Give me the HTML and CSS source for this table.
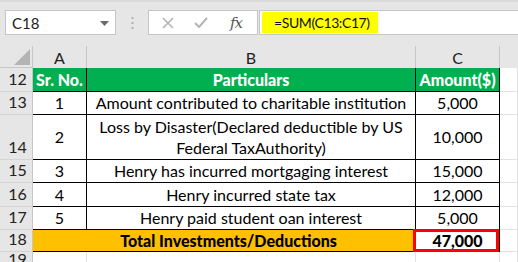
FILE: index.html
```html
<!DOCTYPE html>
<html>
<head>
<meta charset="utf-8">
<link rel="stylesheet" href="styles.css">
</head>
<body>
<div class="app">
  <div class="toolbar">
    <div class="namebox">
      <span class="nb-text">C18</span>
      <svg class="caret" width="9" height="5" viewBox="0 0 9 5"><path d="M0 0 H9 L4.5 5 Z" fill="#6a6a6a"/></svg>
    </div>
    <div class="grip">
      <svg width="3" height="12" viewBox="0 0 3 12"><rect x="0.5" y="0" width="2" height="2" fill="#b0b0b0"/><rect x="0.5" y="5" width="2" height="2" fill="#b0b0b0"/><rect x="0.5" y="10" width="2" height="2" fill="#b0b0b0"/></svg>
    </div>
    <div class="fbtns">
      <svg class="ico-x" width="12" height="12" viewBox="0 0 12 12"><path d="M1 1 L11 11 M11 1 L1 11" stroke="#b4b4b4" stroke-width="1.6" fill="none"/></svg>
      <svg class="ico-ok" width="14" height="11" viewBox="0 0 14 11"><path d="M1 6 L5 10 L13 1" stroke="#b4b4b4" stroke-width="2" fill="none"/></svg>
      <span class="fx">fx</span>
    </div>
    <div class="finput"><span class="hl">=SUM(C13:C17)</span></div>
  </div>
  <div class="sheet">
    <div class="corner"><svg width="16" height="16" viewBox="0 0 16 16"><path d="M16 0 V16 H0 Z" fill="#b4b4b4"/></svg></div>
    <div class="ch">A</div>
    <div class="ch">B</div>
    <div class="ch">C</div>
    <div class="ch ch-end"></div>

    <div class="rh">12</div>
    <div class="c hd">Sr. No.</div>
    <div class="c hd">Particulars</div>
    <div class="c hd">Amount($)</div>
    <div class="e"></div>

    <div class="rh">13</div>
    <div class="c">1</div>
    <div class="c">Amount contributed to charitable institution</div>
    <div class="c">5,000</div>
    <div class="e"></div>

    <div class="rh">14</div>
    <div class="c">2</div>
    <div class="c wrap">Loss by Disaster(Declared deductible by US Federal TaxAuthority)</div>
    <div class="c">10,000</div>
    <div class="e"></div>

    <div class="rh">15</div>
    <div class="c">3</div>
    <div class="c">Henry has incurred mortgaging interest</div>
    <div class="c">15,000</div>
    <div class="e"></div>

    <div class="rh">16</div>
    <div class="c">4</div>
    <div class="c">Henry incurred state tax</div>
    <div class="c">12,000</div>
    <div class="e"></div>

    <div class="rh">17</div>
    <div class="c">5</div>
    <div class="c">Henry paid student oan interest</div>
    <div class="c">5,000</div>
    <div class="e"></div>

    <div class="rh">18</div>
    <div class="c total">Total Investments/Deductions</div>
    <div class="c sum">47,000</div>
    <div class="e"></div>

    <div class="rh">19</div>
    <div class="e"></div>
    <div class="e"></div>
    <div class="e"></div>
    <div class="e"></div>
  </div>
</div>
</body>
</html>
```

FILE: styles.css
```css
* { box-sizing: border-box; }
html, body { margin: 0; padding: 0; }
body {
  width: 518px;
  height: 262px;
  overflow: hidden;
  background: #ffffff;
  font-family: "Lato", "Liberation Sans", sans-serif;
  color: #000;
}
.app { width: 518px; height: 262px; overflow: hidden; }

.toolbar {
  height: 46px;
  background: #e6e6e6;
  border-top: 2px solid #dadada;
  padding-top: 8px;
  display: flex;
  align-items: flex-start;
}
.namebox {
  margin-left: 5px;
  width: 111px;
  height: 25px;
  background: #fff;
  border: 1px solid #c6c6c6;
  display: flex;
  align-items: center;
  justify-content: space-between;
  padding: 0 6px 0 6px;
  font-size: 15px;
  color: #222;
}
.caret { margin-top: 1px; }
.grip {
  width: 32px;
  height: 25px;
  display: flex;
  align-items: center;
  justify-content: center;
}
.fbtns {
  width: 110px;
  height: 25px;
  background: #fff;
  border: 1px solid #c6c6c6;
  display: flex;
  align-items: center;
  padding-left: 13px;
}
.ico-x { margin-right: 20px; }
.ico-ok { margin-right: 22px; }
.fx {
  font-family: "DejaVu Serif", "Liberation Serif", serif;
  font-style: italic;
  font-size: 15px;
  color: #555;
  letter-spacing: -1px;
}
.finput {
  margin-left: 1px;
  flex: 1;
  height: 25px;
  background: #fff;
  border: 1px solid #c6c6c6;
  border-right: none;
  padding: 1px 0 1px 2px;
  display: flex;
}
.hl {
  background: #ffff00;
  width: 116px;
  height: 100%;
  display: flex;
  align-items: center;
  padding-left: 12px;
  font-size: 14px;
  letter-spacing: -0.4px;
  color: #111;
}

.sheet {
  display: grid;
  grid-template-columns: 33px 54px 329px 84px 18px;
  grid-template-rows: 22px 24px 23px 45px 23px 24px 23px 22px 20px;
  font-size: 16px;
}
.corner {
  background: #e6e6e6;
  border-right: 1px solid #c6c6c6;
  border-bottom: 1px solid #c6c6c6;
  display: flex;
  align-items: flex-end;
  justify-content: flex-end;
  padding: 0 2px 2px 0;
}
.ch {
  background: #e6e6e6;
  border-right: 1px solid #c6c6c6;
  display: flex;
  align-items: center;
  justify-content: center;
  font-size: 16px;
  color: #222;
  padding-top: 1px;
}
.ch-end { border-right: none; }
.rh {
  background: #e6e6e6;
  border-right: 1px solid #c6c6c6;
  border-bottom: 1px solid #d4d4d4;
  display: flex;
  align-items: flex-end;
  justify-content: center;
  padding: 0 0 2px 3px;
  font-size: 16px;
  color: #222;
  line-height: 20px;
}
.c {
  border-right: 1px solid #000;
  border-bottom: 1px solid #000;
  display: flex;
  align-items: center;
  justify-content: center;
  text-align: center;
  white-space: nowrap;
  line-height: 20px;
}
.wrap { white-space: normal; line-height: 21px; padding: 0 8px; }
.hd {
  background: #00b050;
  color: #fff;
  font-weight: 900;
}
.total {
  grid-column: span 2;
  background: #ffc000;
  font-weight: 900;
  border-right: none;
  padding-left: 8px;
}
.sum {
  font-weight: 900;
  position: relative;
}
.sum::after {
  content: "";
  position: absolute;
  left: -3px;
  top: -1px;
  right: 0;
  bottom: -1px;
  border: 3px solid #ff0000;
}
.e {
  border-right: 1px solid #e1e1e1;
  border-bottom: 1px solid #e1e1e1;
}
```
